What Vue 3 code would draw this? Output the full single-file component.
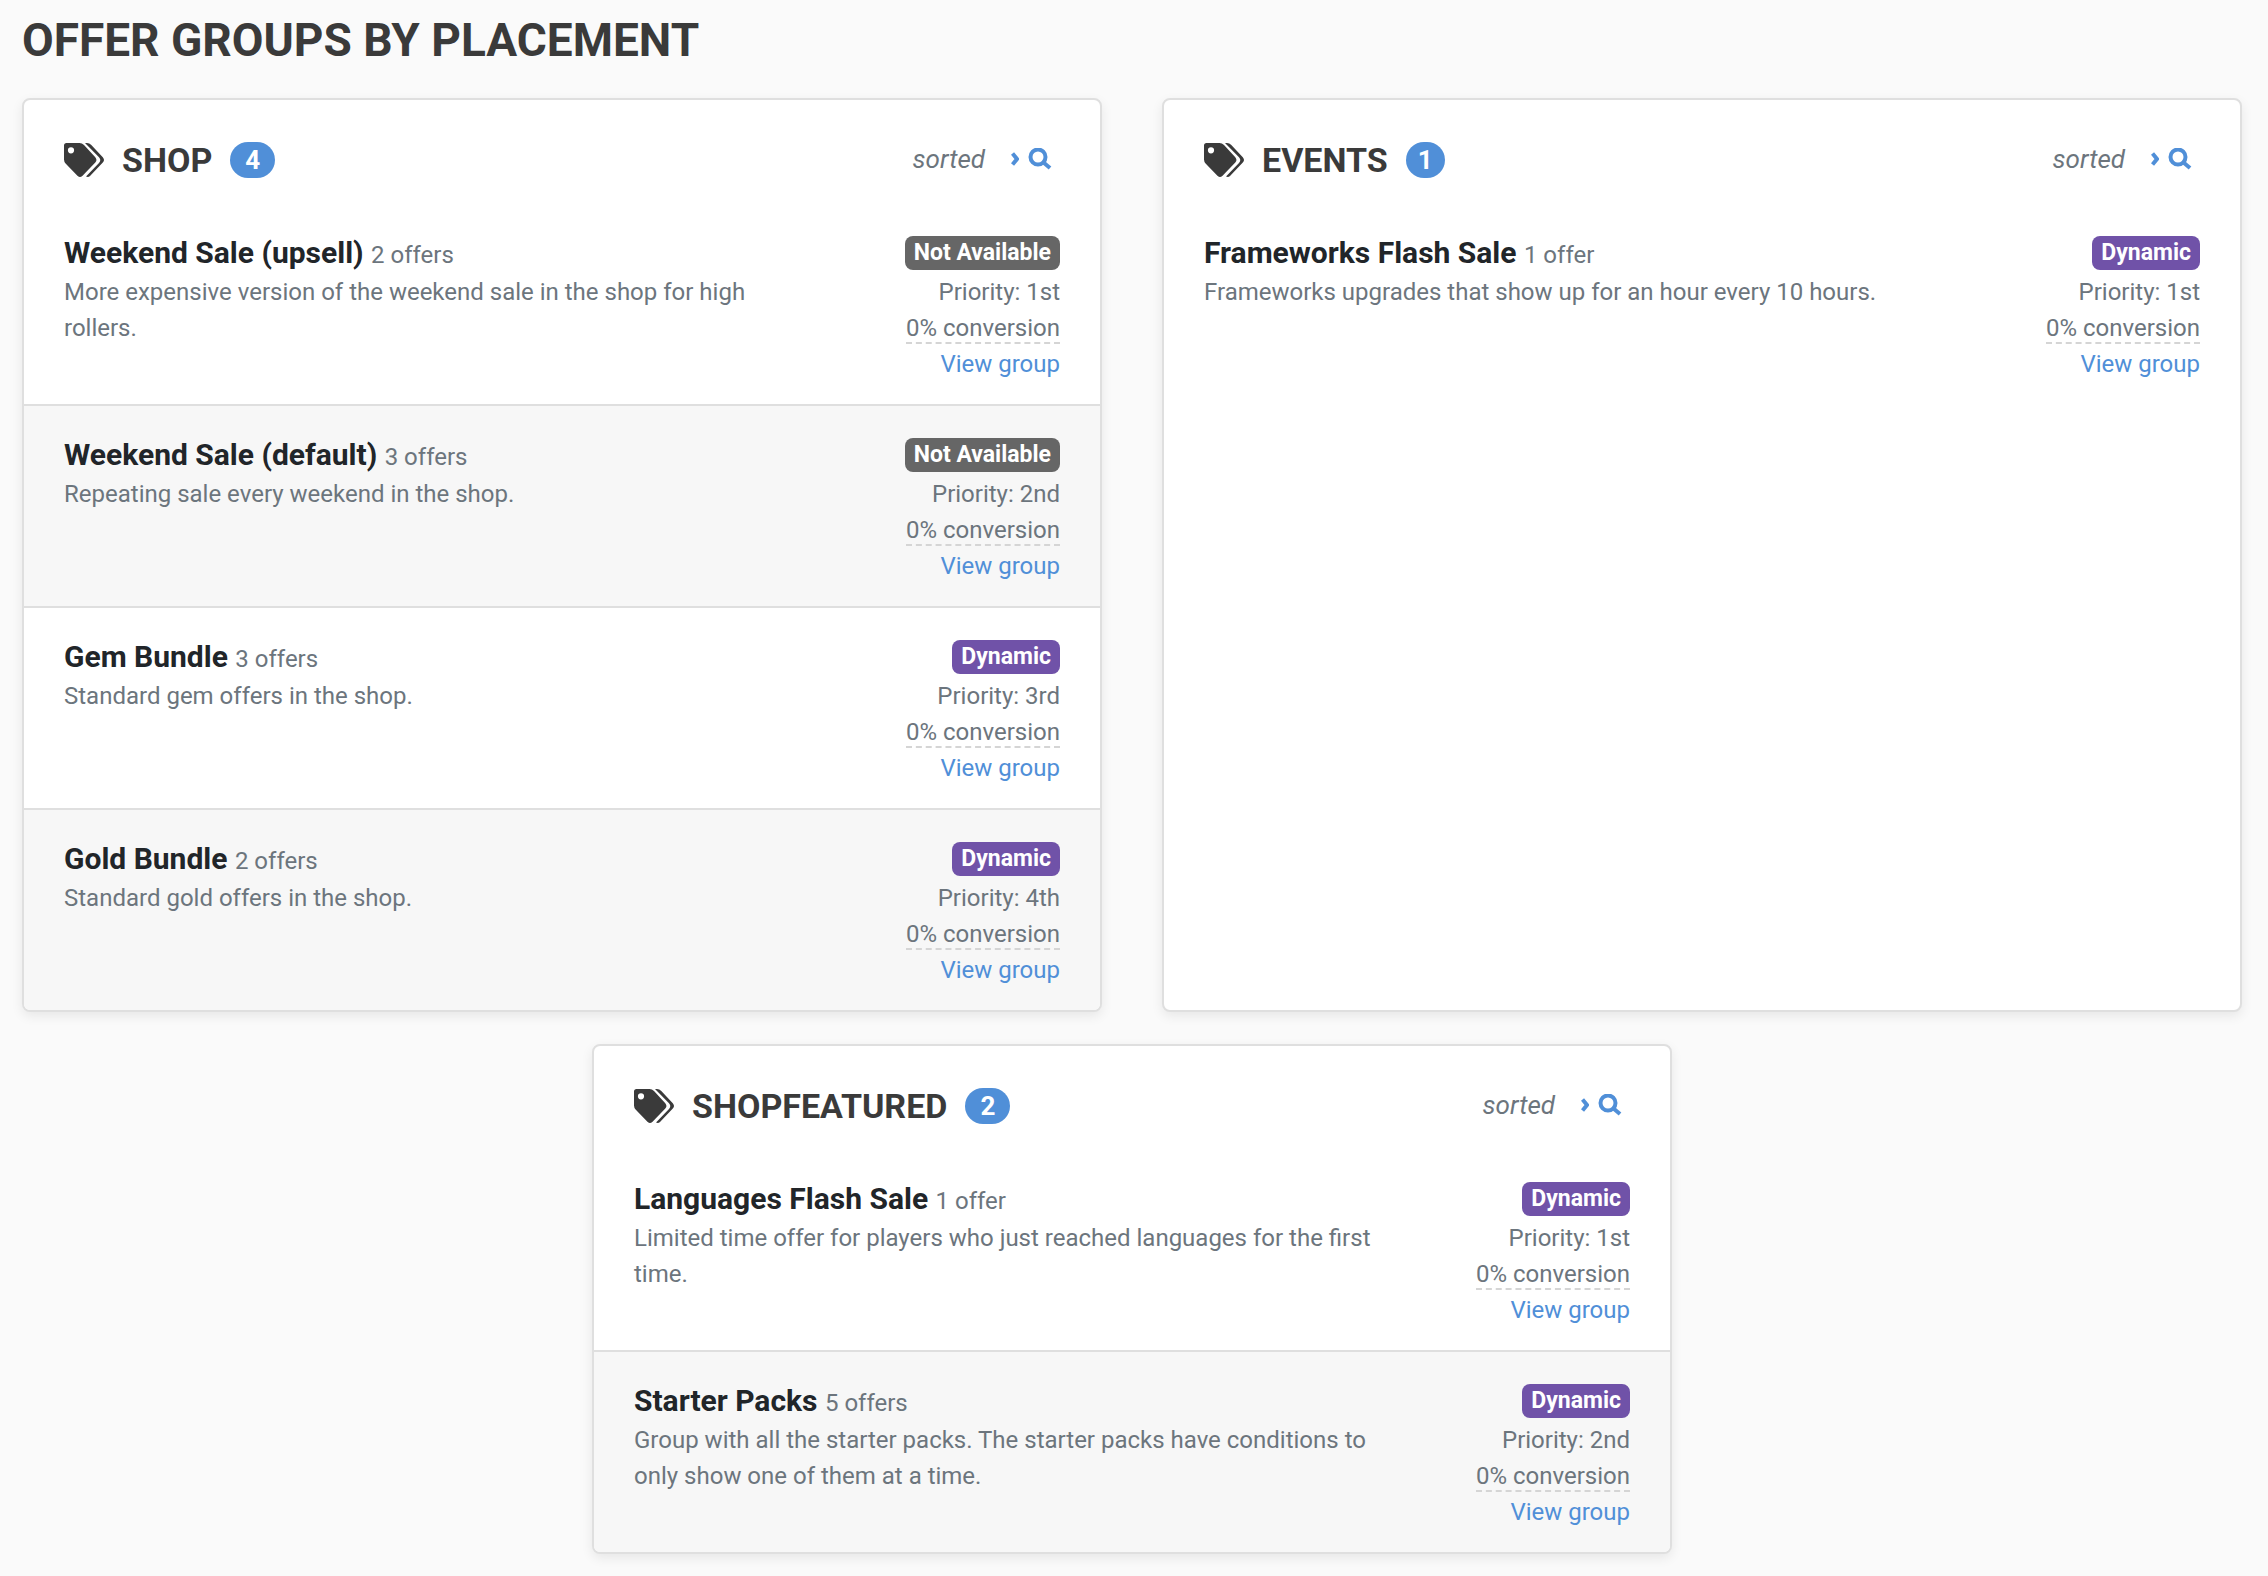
<script setup>
const groups = [
  {
    name: 'SHOP',
    items: [
      { name: 'Weekend Sale (upsell)', offers: '2 offers', text: 'More expensive version of the weekend sale in the shop for high rollers.', status: 'Not Available', rank: '1st' },
      { name: 'Weekend Sale (default)', offers: '3 offers', text: 'Repeating sale every weekend in the shop.', status: 'Not Available', rank: '2nd' },
      { name: 'Gem Bundle', offers: '3 offers', text: 'Standard gem offers in the shop.', status: 'Dynamic', rank: '3rd' },
      { name: 'Gold Bundle', offers: '2 offers', text: 'Standard gold offers in the shop.', status: 'Dynamic', rank: '4th' },
    ],
  },
  {
    name: 'EVENTS',
    items: [
      { name: 'Frameworks Flash Sale', offers: '1 offer', text: 'Frameworks upgrades that show up for an hour every 10 hours.', status: 'Dynamic', rank: '1st' },
    ],
  },
  {
    name: 'SHOPFEATURED',
    items: [
      { name: 'Languages Flash Sale', offers: '1 offer', text: 'Limited time offer for players who just reached languages for the first time.', status: 'Dynamic', rank: '1st' },
      { name: 'Starter Packs', offers: '5 offers', text: 'Group with all the starter packs. The starter packs have conditions to only show one of them at a time.', status: 'Dynamic', rank: '2nd' },
    ],
  },
]
</script>

<template>
  <main class="page">
    <h1 class="title">OFFER GROUPS BY PLACEMENT</h1>
    <div class="groups">
      <section v-for="group in groups" :key="group.name" class="card">
        <header class="head">
          <svg class="tags" viewBox="0 0 40 34" aria-hidden="true">
            <path fill-rule="evenodd" d="M2.500 0H15.500Q18 0 20 2L31.300 14.200Q33.600 17 31.300 19.600L18.300 33Q16 35 13.700 33L1.800 20.800Q0 19 0 16.500V2.500Q0 0 2.500 0ZM7 4.200a3.100 3.100 0 1 0 0 6.200a3.100 3.100 0 1 0 0-6.200Z" />
            <path d="M21 0H23Q25.500 0 27.300 2L38.800 14.200Q41.200 17 38.800 19.600L26 33Q24.300 34.600 22 33.600L35 20Q37.600 17 35 14.200Z" />
          </svg>
          <h2 class="name">{{ group.name }}</h2>
          <span class="count" :class="{ slim: group.items.length === 1 }">{{ group.items.length }}</span>
          <div class="tools">
            <span class="sorted">sorted</span>
            <button class="search" type="button" aria-label="Search">
              <svg class="chevron" viewBox="0 0 8 14" aria-hidden="true"><path d="M1.500 1.500 6 7 1.500 12.500" /></svg>
              <svg class="lens" viewBox="0 0 24 22" aria-hidden="true">
                <circle cx="10" cy="9" r="7.500" /><path d="M15.500 14.500 22 20" />
              </svg>
            </button>
          </div>
        </header>
        <ul class="list">
          <li v-for="item in group.items" :key="item.name" class="row">
            <div class="info">
              <h3 class="item-title">{{ item.name }} <small class="offers">{{ item.offers }}</small></h3>
              <p class="text">{{ item.text }}</p>
            </div>
            <div class="meta">
              <div class="status">
                <span class="badge" :class="{ dynamic: item.status === 'Dynamic' }">{{ item.status }}</span>
              </div>
              <span>Priority: {{ item.rank }}</span>
              <span class="conversion">0% conversion</span>
              <a class="link" href="#">View group</a>
            </div>
          </li>
        </ul>
      </section>
    </div>
  </main>
</template>

<style>
body {
  margin: 0;
  background: #fafafa;
}
</style>

<style scoped>
.page {
  padding: 12px 26px 22px 22px;
  font-family: Roboto, "Liberation Sans", sans-serif;
  font-size: 24px;
  line-height: 36px;
  color: #6c757d;
}
.title {
  margin: 0 0 30px;
  font-size: 46px;
  line-height: 56px;
  font-weight: 700;
  color: #3a3a3a;
}
.groups {
  display: flex;
  flex-wrap: wrap;
  justify-content: center;
  gap: 32px 60px;
}
.card {
  box-sizing: border-box;
  width: calc(50% - 30px);
  border: 2px solid #dfdfdf;
  border-radius: 8px;
  background: #fff;
  box-shadow: 0 4px 12px rgba(0, 0, 0, 0.08);
}
.head {
  display: flex;
  align-items: center;
  height: 36px;
  padding: 42px 48px 26px 40px;
}
.tags {
  width: 40px;
  height: 34px;
  fill: #3a3a3a;
}
.name {
  margin: 0 18px;
  font-size: 34px;
  font-weight: 700;
  color: #3a3a3a;
}
.count {
  padding: 0 15px;
  border-radius: 18px;
  background: #508fd8;
  color: #fff;
  font-size: 26px;
  font-weight: 700;
}
.count.slim {
  padding: 0 12px;
}
.tools {
  display: flex;
  align-items: center;
  margin-left: auto;
  padding-bottom: 3px;
}
.sorted {
  font-size: 26px;
  font-style: italic;
}
.search {
  display: flex;
  align-items: center;
  gap: 9px;
  margin-left: 26px;
  padding: 0;
  border: 0;
  background: none;
}
.search svg {
  fill: none;
  stroke: #508fd8;
  stroke-width: 4;
}
.chevron {
  width: 8px;
  height: 14px;
}
.lens {
  width: 24px;
  height: 22px;
}
.list {
  margin: 0;
  padding: 0;
  list-style: none;
}
.row {
  display: flex;
  padding: 30px 40px 22px;
}
.row + .row {
  border-top: 2px solid #dfdfdf;
}
.row:nth-child(even) {
  background: #f7f7f7;
}
.row:last-child {
  border-radius: 0 0 6px 6px;
}
.info {
  width: 75%;
}
.item-title {
  margin: 0;
  font-size: 30px;
  line-height: 38px;
  font-weight: 700;
  color: #212529;
}
.offers {
  font-size: 24px;
  font-weight: 400;
  color: #6c757d;
}
.text {
  margin: 0;
}
.meta {
  display: flex;
  flex-direction: column;
  align-items: flex-end;
  width: 25%;
}
.status {
  display: flex;
  align-items: center;
  height: 38px;
  padding-bottom: 2px;
}
.badge {
  padding: 0 9px;
  border-radius: 8px;
  background: #666;
  color: #fff;
  font-size: 23px;
  line-height: 34px;
  font-weight: 700;
}
.badge.dynamic {
  background: #7052a8;
}
.conversion {
  box-sizing: border-box;
  height: 34px;
  margin-bottom: 2px;
  border-bottom: 2px dashed #d5d5d5;
}
.link {
  color: #508fd8;
  text-decoration: none;
}
</style>
